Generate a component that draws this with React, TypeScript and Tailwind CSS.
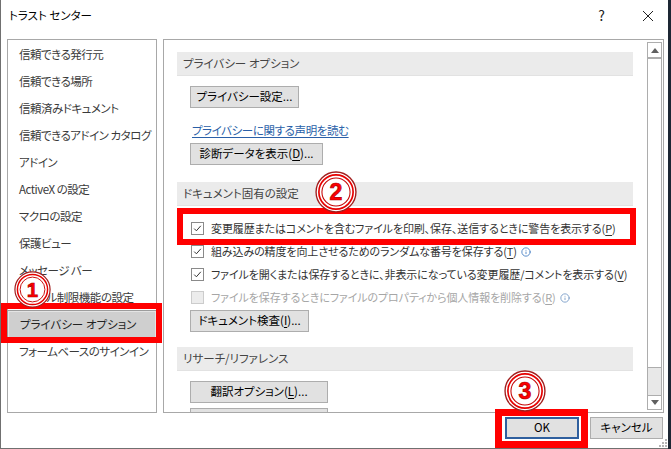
import { Info } from "lucide-react";
import type { ReactNode } from "react";

const leftItems = [
  "信頼できる発行元",
  "信頼できる場所",
  "信頼済みドキュメント",
  "信頼できるアドイン カタログ",
  "アドイン",
  "ActiveX の設定",
  "マクロの設定",
  "保護ビュー",
  "メッセージ バー",
  "ファイル制限機能の設定",
  "プライバシー オプション",
  "フォームベースのサインイン",
];

function Btn({ children, className = "" }: { children: ReactNode; className?: string }) {
  return (
    <div className={`flex h-[22px] items-center justify-center whitespace-nowrap border border-[#adadad] bg-[#e1e1e1] text-[11.5px] text-black ${className}`}>
      {children}
    </div>
  );
}

function Key({ k }: { k: string }) {
  return (
    <>
      (<span className="underline underline-offset-2">{k}</span>)
    </>
  );
}

function SectionHeader({ title, className = "" }: { title: string; className?: string }) {
  return (
    <div className={`ml-[13px] flex h-[24px] w-[456px] items-center border-b border-[#e2e2e2] bg-[#ebebeb] pl-[6px] text-[11.5px] text-[#444] ${className}`}>
      {title}
    </div>
  );
}

function CheckRow({ children, disabled = false }: { children: ReactNode; disabled?: boolean }) {
  return (
    <div className={`flex h-[23px] items-center pl-[27px] text-[11px] tracking-[-0.1px] ${disabled ? "text-[#a6a6a6]" : "text-[#333]"}`}>
      {disabled ? (
        <div className="mr-[7px] h-[13px] w-[13px] shrink-0 border border-[#cccccc] bg-[#ececec]" />
      ) : (
        <div className="mr-[7px] flex h-[13px] w-[13px] shrink-0 items-center justify-center border border-[#8a8a8a] bg-white">
          <svg width="9" height="9" viewBox="0 0 9 9">
            <path d="M1.2 4.6 L3.4 6.8 L7.8 1.8" fill="none" stroke="#333" strokeWidth="1" />
          </svg>
        </div>
      )}
      <span className="flex items-center whitespace-nowrap">{children}</span>
    </div>
  );
}

function Badge({ n, size }: { n: string; size: number }) {
  return (
    <svg width={size} height={size} viewBox="0 0 40 40">
      <circle cx="20" cy="20" r="19" fill="white" stroke="#a11d1d" strokeWidth="1.3" />
      <circle cx="20" cy="20" r="16.3" fill="none" stroke="#e60000" strokeWidth="1.6" />
      <circle cx="20" cy="20" r="13.4" fill="none" stroke="#c40000" strokeWidth="1" />
      <text
        x="20"
        y="28"
        textAnchor="middle"
        fontSize="22"
        fontWeight="900"
        fill="#ff0000"
        stroke="#b00000"
        strokeWidth="0.7"
        fontFamily="Liberation Sans, Arial, sans-serif"
      >
        {n}
      </text>
    </svg>
  );
}

export default function App() {
  return (
    <div className="flex h-[449px] w-[671px] bg-[#1d2734] font-['Noto_Sans_CJK_JP',sans-serif] [font-feature-settings:'palt']">
      <div className="relative flex h-[449px] w-[668px] flex-col border-b border-l border-[#707070] bg-white">
        {/* Title bar */}
        <div className="flex h-[31px] items-center pl-[8px] text-[11.5px] text-black">
          <span>トラスト センター</span>
          <span className="ml-auto mr-[37px] text-[14px] text-[#222]">?</span>
          <svg width="12" height="12" viewBox="0 0 12 12" className="mr-[14px]">
            <path d="M1 1 L11 11 M11 1 L1 11" stroke="#222" strokeWidth="1" />
          </svg>
        </div>

        {/* Body */}
        <div className="mt-[8px] flex">
          {/* Left nav */}
          <div className="ml-[6px] h-[374px] w-[150px] border border-[#a8a8a8] pt-[1px]">
            {leftItems.map((item) =>
              item === "プライバシー オプション" ? (
                <div
                  key={item}
                  className="-mx-px my-[-1px] flex h-[29px] items-center whitespace-nowrap border border-[#9c9c9c] bg-[#cfcfcf] pl-[12px] text-[11.5px] text-[#222] shadow-[inset_0_0_0_1px_#e4e4e4]"
                >
                  {item}
                </div>
              ) : (
                <div key={item} className="flex h-[27px] items-center whitespace-nowrap pl-[11px] text-[11.5px] tracking-[-0.5px] text-[#3a3a3a]">
                  {item}
                </div>
              )
            )}
          </div>

          {/* Right panel */}
          <div className="ml-[6px] flex h-[374px] w-[501px] border border-[#a8a8a8]">
            <div className="flex-1 overflow-hidden">
              <SectionHeader title="プライバシー オプション" className="mt-[12px]" />
              <Btn className="ml-[26px] mt-[10px] w-[109px]">プライバシー設定...</Btn>
              <div className="ml-[28px] mt-[14px] h-[16px] text-[11.5px] leading-[16px] tracking-[-0.4px] text-[#2a5fa8] underline underline-offset-2">
                プライバシーに関する声明を読む
              </div>
              <Btn className="ml-[26px] mt-[5px] w-[133px]">
                診断データを表示<Key k="D" />...
              </Btn>

              <SectionHeader title="ドキュメント固有の設定" className="mt-[17px]" />
              <div className="mt-[11px]">
                <CheckRow>
                  変更履歴またはコメントを含むファイルを印刷、保存、送信するときに警告を表示する<Key k="P" />
                </CheckRow>
                <CheckRow>
                  組み込みの精度を向上させるためのランダムな番号を保存する<Key k="T" />
                  <Info size={10} className="ml-[4px] text-[#3c78c0]" />
                </CheckRow>
                <CheckRow>
                  ファイルを開くまたは保存するときに、非表示になっている変更履歴/コメントを表示する<Key k="V" />
                </CheckRow>
                <CheckRow disabled>
                  ファイルを保存するときにファイルのプロパティから個人情報を削除する<Key k="R" />
                  <Info size={10} className="ml-[4px] text-[#6f95c4]" />
                </CheckRow>
              </div>
              <Btn className="ml-[26px] mt-[1px] w-[119px]">
                ドキュメント検査<Key k="I" />...
              </Btn>

              <SectionHeader title="リサーチ/リファレンス" className="mt-[15px]" />
              <Btn className="ml-[26px] mt-[10px] w-[138px]">
                翻訳オプション<Key k="L" />...
              </Btn>
              <Btn className="ml-[26px] mt-[5px] w-[138px]"> </Btn>
            </div>

            {/* Scrollbar */}
            <div className="mr-[1px] mt-[2px] mb-[2px] flex w-[15px] flex-col border border-[#adadad]">
              <div className="flex h-[14px] items-center justify-center">
                <svg width="8" height="5" viewBox="0 0 8 5">
                  <polygon points="0,5 8,5 4,0" fill="#606060" />
                </svg>
              </div>
              <div className="h-[311px] border-t-2 border-b border-[#adadad] bg-white" />
              <div className="flex-1 bg-[#e8e8e8]" />
              <div className="flex h-[14px] items-center justify-center border-t border-[#adadad]">
                <svg width="8" height="5" viewBox="0 0 8 5">
                  <polygon points="0,0 8,0 4,5" fill="#606060" />
                </svg>
              </div>
            </div>
          </div>
        </div>

        {/* Bottom buttons */}
        <div className="mt-[4px] flex justify-end pr-[5px]">
          <div className="flex h-[22px] w-[74px] items-center justify-center border-2 border-[#2f5f9e] bg-[#e1e1e1] text-[11.5px] text-black">
            OK
          </div>
          <Btn className="ml-[11px] w-[73px]">キャンセル</Btn>
        </div>

        {/* Resize grip */}
        <svg width="8" height="8" viewBox="0 0 8 8" className="absolute bottom-[1px] right-[1px]">
          <rect x="6" y="0" width="2" height="2" fill="#b5b5b5" />
          <rect x="3" y="3" width="2" height="2" fill="#b5b5b5" />
          <rect x="6" y="3" width="2" height="2" fill="#b5b5b5" />
          <rect x="0" y="6" width="2" height="2" fill="#b5b5b5" />
          <rect x="3" y="6" width="2" height="2" fill="#b5b5b5" />
          <rect x="6" y="6" width="2" height="2" fill="#b5b5b5" />
        </svg>

        {/* Annotations */}
        <div className="absolute left-[0px] top-[303px] h-[40px] w-[161px] border-[6px] border-[#ff0000]" />
        <div className="absolute left-[176px] top-[208px] h-[37px] w-[459px] border-[6px] border-[#ff0000]" />
        <div className="absolute left-[494px] top-[409px] h-[39px] w-[93px] border-[7px] border-[#ff0000]" />

        <div className="absolute left-[13px] top-[271px]">
          <Badge n="1" size={37} />
        </div>
        <div className="absolute left-[314px] top-[171px]">
          <Badge n="2" size={42} />
        </div>
        <div className="absolute left-[503px] top-[370px]">
          <Badge n="3" size={42} />
        </div>
      </div>
    </div>
  );
}
